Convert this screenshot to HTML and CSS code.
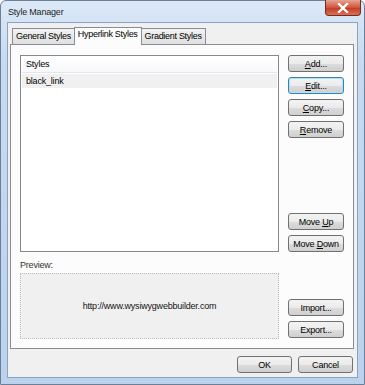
FILE: index.html
```html
<!DOCTYPE html>
<html>
  <head>
    <meta charset='utf-8'>
    <title>Style Manager</title>
    <link rel="stylesheet" href="styles.css">
  </head>
  <body>
    <div class='window'>
      <div class='titlebar'>
        <span class='title'>Style Manager</span>
        <span class='close'>
          <svg width='12' height='10' viewBox='0 0 12 10'>
            <path d='M2 1 L10 9 M10 1 L2 9' stroke='#fff' stroke-width='2.4' stroke-linecap='square'/>
          </svg>
        </span>
      </div>
      <div class='client'>
        <div class='tabs'>
          <span class='tab'>General Styles</span>
          <span class='tab active'>Hyperlink Styles</span>
          <span class='tab'>Gradient Styles</span>
        </div>
        <div class='panel'>
          <div class='top'>
            <div class='list'>
              <div class='header'>Styles</div>
              <div class='row selected'>black_link</div>
            </div>
            <div class='side'>
              <button class='btn'><u>A</u>dd...</button>
              <button class='btn focus'><u>E</u>dit...</button>
              <button class='btn'><u>C</u>opy...</button>
              <button class='btn'><u>R</u>emove</button>
              <div class='spacer'></div>
              <button class='btn'>Move <u>U</u>p</button>
              <button class='btn'>Move <u>D</u>own</button>
            </div>
          </div>
          <div class='label'>Preview:</div>
          <div class='bottom'>
            <div class='preview'>http://www.wysiwygwebbuilder.com</div>
            <div class='side low'>
              <button class='btn'>Import...</button>
              <button class='btn'>Export...</button>
            </div>
          </div>
        </div>
        <div class='footer'>
          <button class='btn wide'>OK</button>
          <button class='btn wide'>Cancel</button>
        </div>
      </div>
    </div>
  </body>
</html>
```

FILE: styles.css
```css
body {
  margin: 0;
  font-family: "Liberation Sans", Arial, sans-serif;
  font-size: 9px;
  letter-spacing: -0.2px;
  background: #fff;
}
.window {
  width: 365px;
  height: 385px;
  box-sizing: border-box;
  border: 1px solid #6c7f99;
  border-radius: 6px 6px 0 0;
  background: linear-gradient(#dce9f7, #c7daf0 60px, #bcd2ec);
  display: flex;
  flex-direction: column;
  padding: 0 6px 6px 6px;
}
.titlebar {
  height: 21px;
  display: flex;
  align-items: flex-start;
  justify-content: space-between;
}
.title {
  margin-top: 6px;
  margin-left: 1px;
  font-size: 9px;
  letter-spacing: -0.2px;
  color: #1e1e1e;
}
.close {
  width: 36px;
  height: 16px;
  margin-top: -1px;
  margin-right: -3px;
  box-sizing: border-box;
  border: 1px solid #7a2a1a;
  border-top: none;
  border-radius: 0 0 4px 4px;
  background: linear-gradient(#e8a493, #d0533a 50%, #c13a20 51%, #d9705a);
  display: flex;
  align-items: center;
  justify-content: center;
}
.client {
  flex: 1;
  background: #f0f0f0;
  border: 1px solid #8aa3c2;
  display: flex;
  flex-direction: column;
  padding: 5px 3px 0 2px;
}
.tabs {
  display: flex;
  padding-left: 2px;
  height: 16px;
  align-items: flex-end;
  position: relative;
  z-index: 1;
}
.tab {
  border: 1px solid #898c95;
  border-bottom: none;
  background: linear-gradient(#f2f2f2, #e0e0e0);
  padding: 1px 3px 2px 3px;
  margin-right: -1px;
  color: #000;
  height: 12px;
  line-height: 12px;
  letter-spacing: -0.3px;
  white-space: nowrap;
}
.tab.active {
  background: #fcfcfc;
  height: 15px;
  line-height: 11px;
  margin-bottom: -1px;
  padding-bottom: 1px;
  position: relative;
}
.panel {
  height: 305px;
  box-sizing: border-box;
  border: 1px solid #898c95;
  background: #fcfcfc;
  padding: 10px 9px 0 9px;
  display: flex;
  flex-direction: column;
}
.top {
  display: flex;
  gap: 9px;
}
.list {
  width: 259px;
  height: 197px;
  box-sizing: border-box;
  border: 1px solid #828790;
  background: #fff;
  padding: 1px 1px 0 1px;
}
.header {
  height: 15px;
  line-height: 15px;
  padding-left: 4px;
  background: linear-gradient(#ffffff, #f7f8fa);
  border-bottom: 1px solid #e3e5e8;
}
.row {
  height: 14px;
  line-height: 14px;
  padding-left: 4px;
  margin-top: 1px;
}
.row.selected {
  background: #f0f0f0;
}
.side {
  display: flex;
  flex-direction: column;
  gap: 5px;
}
.spacer {
  flex: 1;
}
.btn {
  width: 56px;
  height: 17px;
  box-sizing: border-box;
  border: 1px solid #707070;
  border-radius: 3px;
  background: linear-gradient(#f3f3f3, #ebebeb 50%, #dddddd 51%, #cfcfcf);
  font-family: "Liberation Sans", Arial, sans-serif;
  font-size: 9px;
  letter-spacing: -0.2px;
  color: #000;
  padding: 0;
  line-height: 14px;
  white-space: nowrap;
}
.btn.focus {
  border-color: #3c7fb1;
  box-shadow: inset 0 0 0 1px #aee2f7;
}
.label {
  margin-top: 8px;
  height: 12px;
  color: #333;
}
.bottom {
  display: flex;
  gap: 9px;
  margin-top: 1px;
}
.preview {
  width: 259px;
  height: 66px;
  box-sizing: border-box;
  border: 1px dotted #b8b8b8;
  background: #f0f0f0;
  display: flex;
  align-items: center;
  justify-content: center;
  color: #111;
}
.side.low {
  justify-content: flex-end;
  padding-bottom: 1px;
}
.footer {
  display: flex;
  justify-content: flex-end;
  gap: 6px;
  margin-top: 7px;
  padding-right: 1px;
}
.btn.wide {
  width: 55px;
}
```
